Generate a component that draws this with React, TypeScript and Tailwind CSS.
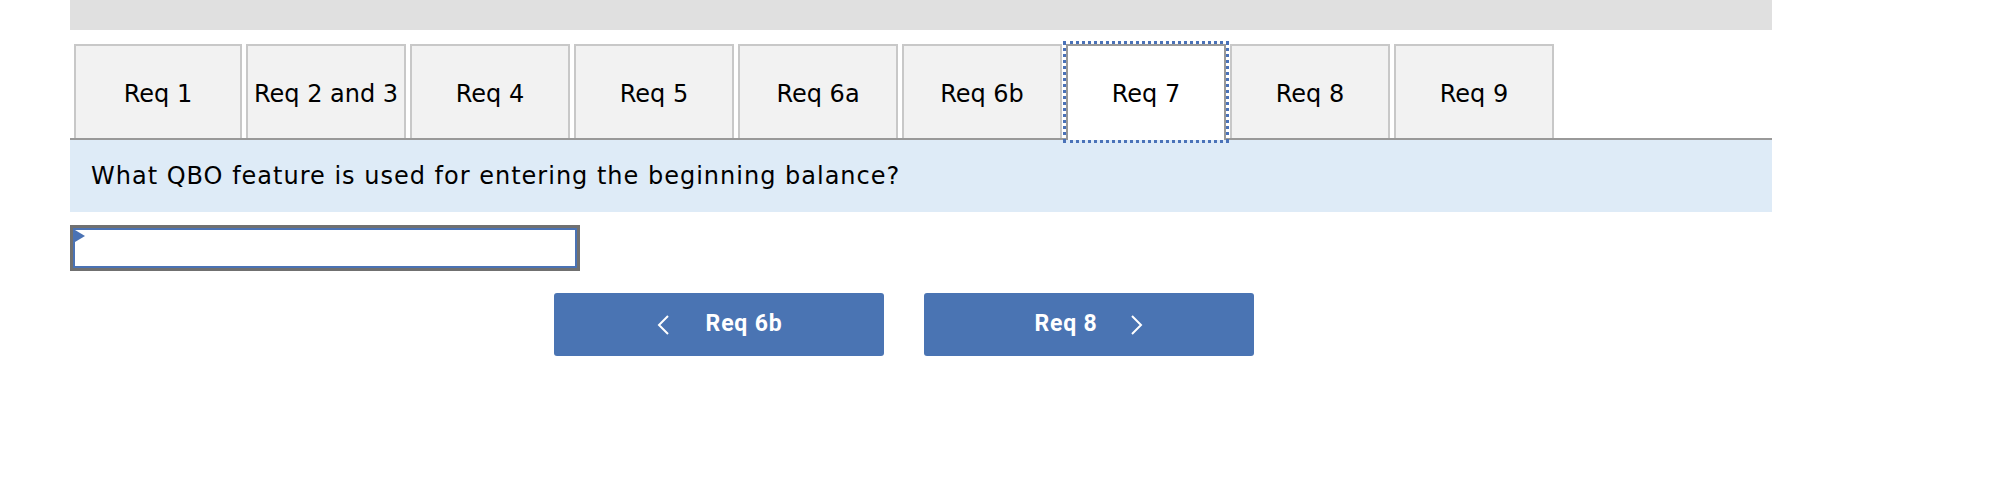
import React from "react";

const tabs = ["Req 1", "Req 2 and 3", "Req 4", "Req 5", "Req 6a", "Req 6b", "Req 7", "Req 8", "Req 9"];

export default function App() {
  return (
    <div className="w-[2014px] h-[480px] bg-white" style={{ fontFamily: '"DejaVu Sans", Verdana, sans-serif' }}>
      <div className="ml-[70px] w-[1702px]">
        <div className="h-[30px] bg-[#e0e0e0]" />
        <div className="mt-[14px] flex items-end gap-[4px] pl-[4px] h-[96px] border-b-2 border-[#999999]">
          {tabs.map((t, i) => {
            const active = t === "Req 7";
            const w = i === 0 ? "w-[168px]" : "w-[160px]";
            return active ? (
              <div
                key={t}
                className={`${w} h-[96px] -mb-[2px] pt-[1px] relative z-10 flex items-center justify-center bg-white border-2 border-b-0 border-[#999999] outline-[3px] outline-dotted outline-[#4a72b8] text-[24px] text-black whitespace-nowrap`}
              >
                {t}
              </div>
            ) : (
              <div
                key={t}
                className={`${w} h-[94px] pt-[4px] flex items-center justify-center bg-[#f2f2f2] border-2 border-b-0 border-[#c8c8c8] text-[24px] text-black whitespace-nowrap`}
              >
                {t}
              </div>
            );
          })}
        </div>
        <div className="h-[72px] bg-[#deebf7] flex items-center pl-[21px] text-[24px] tracking-[1px] text-black">
          What QBO feature is used for entering the beginning balance?
        </div>
        <div className="mt-[13px] w-[510px] h-[46px] border-[3px] border-[#707070] relative shadow-[inset_0_0_0_2px_#4a72b4] bg-white">
          <div className="absolute left-[2px] top-[2px] w-0 h-0 border-y-[6px] border-y-transparent border-l-[10px] border-l-[#4a72b4]" />
        </div>
        <div className="mt-[22px] ml-[484px] flex gap-[40px]" style={{ fontFamily: 'Roboto, "Open Sans", sans-serif' }}>
          <button className="w-[330px] h-[63px] rounded-[3px] bg-[#4a74b3] text-white font-bold text-[23px] tracking-[0.8px] flex items-center justify-center gap-[34px]">
            <svg width="16" height="22" viewBox="0 0 16 22" fill="none" stroke="white" strokeWidth="2">
              <path d="M12 2 L3 11 L12 20" />
            </svg>
            <span>Req 6b</span>
          </button>
          <button className="w-[330px] h-[63px] rounded-[3px] bg-[#4a74b3] text-white font-bold text-[23px] tracking-[0.8px] flex items-center justify-center gap-[30px]">
            <span>Req 8</span>
            <svg width="16" height="22" viewBox="0 0 16 22" fill="none" stroke="white" strokeWidth="2">
              <path d="M4 2 L13 11 L4 20" />
            </svg>
          </button>
        </div>
      </div>
    </div>
  );
}
